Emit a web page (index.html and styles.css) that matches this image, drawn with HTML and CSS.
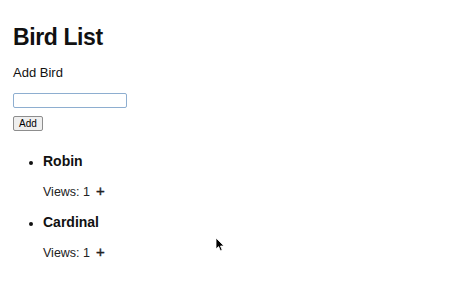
FILE: index.html
```html
<!DOCTYPE html>
<html lang="en">
<head>
<meta charset="utf-8">
<title>Bird List</title>
<link rel="stylesheet" href="styles.css">
</head>
<body>
<div class="app">
  <h1 class="title">Bird List</h1>
  <form class="add-form">
    <label class="add-label" for="bird">Add Bird</label>
    <input class="add-input" id="bird" type="text">
    <button class="add-button" type="button">Add</button>
  </form>
  <ul class="birds">
    <li class="bird">
      <h3 class="bird-name">Robin</h3>
      <p class="bird-views"><span>Views: 1</span><button class="plus" type="button">+</button></p>
    </li>
    <li class="bird">
      <h3 class="bird-name">Cardinal</h3>
      <p class="bird-views"><span>Views: 1</span><button class="plus" type="button">+</button></p>
    </li>
  </ul>
</div>
<svg class="cursor" width="10" height="15" viewBox="0 0 10 15">
  <path d="M1 1 L1 12 L3.6 9.6 L5.4 13.8 L7.2 13 L5.5 9 L9 9 Z" fill="#000" stroke="#fff" stroke-width="0.8" stroke-linejoin="round"/>
</svg>
</body>
</html>
```
FILE: styles.css
```css
html, body {
  margin: 0;
  padding: 0;
  background: #fff;
}
body {
  font-family: "Liberation Sans", Arial, Helvetica, sans-serif;
  color: #111;
  width: 474px;
  height: 287px;
  overflow: hidden;
  position: relative;
}
.app {
  padding: 23px 13px 0;
}
.title {
  margin: 0;
  font-size: 23px;
  line-height: 28px;
  font-weight: bold;
  letter-spacing: -0.4px;
}
.add-form {
  display: flex;
  flex-direction: column;
  align-items: flex-start;
  margin: 0;
}
.add-label {
  margin-top: 14px;
  font-size: 13px;
  line-height: 16px;
}
.add-input {
  margin: 12px 0 0;
  box-sizing: border-box;
  width: 114px;
  height: 15px;
  border: 1px solid #8eaed0;
  border-radius: 2px;
  padding: 0 2px;
  background: #fff;
  outline: none;
}
.add-button {
  margin: 8px 0 0;
  box-sizing: border-box;
  width: 30px;
  height: 15px;
  padding: 0;
  font-family: "Liberation Sans", Arial, sans-serif;
  font-size: 10px;
  line-height: 13px;
  color: #000;
  background: #efefef;
  border: 1px solid #8d8d8d;
  border-radius: 2px;
}
.birds {
  margin: 21px 0 0;
  padding-left: 30px;
  list-style-type: disc;
}
.bird::marker {
  font-size: 12.5px;
}
.bird + .bird {
  margin-top: 14px;
}
.bird-name {
  margin: 0;
  font-size: 14px;
  line-height: 18px;
  font-weight: bold;
}
.bird-views {
  display: flex;
  align-items: baseline;
  gap: 6px;
  height: 16px;
  margin: 13px 0 0;
  font-size: 12.5px;
  line-height: 16px;
  color: #222;
}
.plus {
  padding: 0;
  border: none;
  background: transparent;
  font-family: "Liberation Sans", Arial, sans-serif;
  font-size: 15px;
  font-weight: normal;
  line-height: 16px;
  color: #222;
  -webkit-text-stroke: 0.4px #222;
}
.cursor {
  position: absolute;
  left: 215px;
  top: 237px;
}
```
